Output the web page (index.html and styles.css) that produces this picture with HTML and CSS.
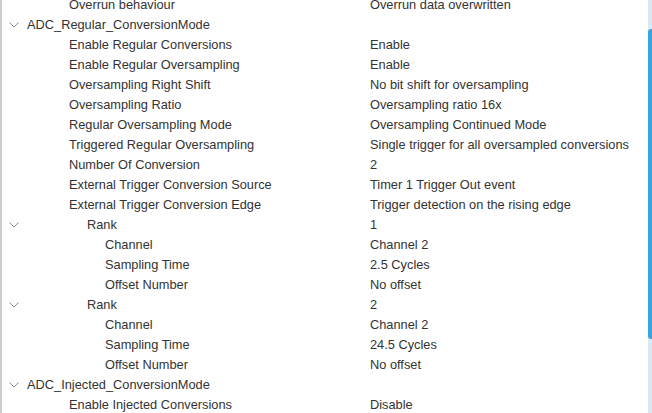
FILE: index.html
```html
<!DOCTYPE html>
<html>
<head>
<meta charset="utf-8">
<link rel="stylesheet" href="styles.css">
</head>
<body>
<div class="panel">
  <div class="edge"></div>
  <div class="tree">
    <div class="rows">
      <div class="row"><span class="name l1">Overrun behaviour</span><span class="val">Overrun data overwritten</span></div>
      <div class="row"><span class="chev"><svg width="10" height="6" viewBox="0 0 10 6"><path d="M0.5 0.5 L5 5 L9.5 0.5" fill="none" stroke="#8a8d91" stroke-width="1"/></svg></span><span class="name l0">ADC_Regular_ConversionMode</span></div>
      <div class="row"><span class="name l1">Enable Regular Conversions</span><span class="val">Enable</span></div>
      <div class="row"><span class="name l1">Enable Regular Oversampling</span><span class="val">Enable</span></div>
      <div class="row"><span class="name l1">Oversampling Right Shift</span><span class="val">No bit shift for oversampling</span></div>
      <div class="row"><span class="name l1">Oversampling Ratio</span><span class="val">Oversampling ratio 16x</span></div>
      <div class="row"><span class="name l1">Regular Oversampling Mode</span><span class="val">Oversampling Continued Mode</span></div>
      <div class="row"><span class="name l1">Triggered Regular Oversampling</span><span class="val">Single trigger for all oversampled conversions</span></div>
      <div class="row"><span class="name l1">Number Of Conversion</span><span class="val">2</span></div>
      <div class="row"><span class="name l1">External Trigger Conversion Source</span><span class="val">Timer 1 Trigger Out event</span></div>
      <div class="row"><span class="name l1">External Trigger Conversion Edge</span><span class="val">Trigger detection on the rising edge</span></div>
      <div class="row"><span class="chev"><svg width="10" height="6" viewBox="0 0 10 6"><path d="M0.5 0.5 L5 5 L9.5 0.5" fill="none" stroke="#8a8d91" stroke-width="1"/></svg></span><span class="name l2">Rank</span><span class="val">1</span></div>
      <div class="row"><span class="name l3">Channel</span><span class="val">Channel 2</span></div>
      <div class="row"><span class="name l3">Sampling Time</span><span class="val">2.5 Cycles</span></div>
      <div class="row"><span class="name l3">Offset Number</span><span class="val">No offset</span></div>
      <div class="row"><span class="chev"><svg width="10" height="6" viewBox="0 0 10 6"><path d="M0.5 0.5 L5 5 L9.5 0.5" fill="none" stroke="#8a8d91" stroke-width="1"/></svg></span><span class="name l2">Rank</span><span class="val">2</span></div>
      <div class="row"><span class="name l3">Channel</span><span class="val">Channel 2</span></div>
      <div class="row"><span class="name l3">Sampling Time</span><span class="val">24.5 Cycles</span></div>
      <div class="row"><span class="name l3">Offset Number</span><span class="val">No offset</span></div>
      <div class="row"><span class="chev"><svg width="10" height="6" viewBox="0 0 10 6"><path d="M0.5 0.5 L5 5 L9.5 0.5" fill="none" stroke="#8a8d91" stroke-width="1"/></svg></span><span class="name l0">ADC_Injected_ConversionMode</span></div>
      <div class="row"><span class="name l1">Enable Injected Conversions</span><span class="val">Disable</span></div>
    </div>
  </div>
  <div class="scroll"><div class="thumb"></div></div>
</div>
</body>
</html>
```

FILE: styles.css
```css
html, body {
  margin: 0;
  padding: 0;
  background: #ffffff;
  overflow: hidden;
}
.panel {
  display: flex;
  width: 652px;
  height: 413px;
  overflow: hidden;
  font-family: "Liberation Sans", Arial, sans-serif;
  font-size: 12.8px;
  color: #333333;
}
.edge {
  width: 2px;
  flex: none;
  background: #c9cdd2;
}
.tree {
  flex: 1;
  overflow: hidden;
}
.rows {
  display: flex;
  flex-direction: column;
  margin-top: -6px;
}
.row {
  position: relative;
  display: flex;
  align-items: center;
  height: 20px;
  white-space: nowrap;
}
.chev {
  position: absolute;
  left: 7px;
  top: 8px;
  width: 10px;
  height: 6px;
  display: flex;
}
.name {
  width: 368px;
  flex: none;
  box-sizing: border-box;
}
.l0 { padding-left: 25px; }
.l1 { padding-left: 67px; }
.l2 { padding-left: 85px; }
.l3 { padding-left: 103px; }
.val {
  flex: none;
}
.scroll {
  width: 4px;
  flex: none;
  background: #d9e8f5;
  display: flex;
  flex-direction: column;
}
.thumb {
  margin-top: 29px;
  height: 310px;
  background: #36a6dc;
  border-radius: 3px 0 0 3px;
}
```
